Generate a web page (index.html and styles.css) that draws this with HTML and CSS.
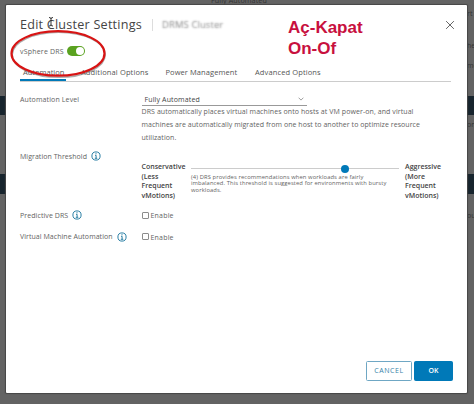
FILE: index.html
```
<!DOCTYPE html>
<html lang="en">
<head>
<meta charset="utf-8">
<title>Edit Cluster Settings</title>
<link rel="stylesheet" href="styles.css">
</head>
<body>
<div class="backdrop">
  <div class="back-title">Fully Automated</div>
  <div class="back-line l1">rt</div>
  <div class="back-line l2">he</div>
  <div class="back-line l3">me</div>
  <div class="band"></div>
  <div class="back-line l4">on</div>
  <div class="band second"></div>
  <div class="back-line l5">ou</div>
</div>
<main class="modal">
  <header class="head">
    <h1>Edit Cluster Settings</h1>
    <span class="divider"></span>
    <span class="cluster">DRMS Cluster</span>
    <svg class="close" viewBox="0 0 9 9"><path d="M1 1l7 7M8 1L1 8"/></svg>
  </header>
  <div class="switch-row"><span class="t-drs">vSphere DRS</span><span class="switch"></span></div>
  <nav class="tabs">
    <span class="tab active">Automation</span>
    <span class="tab t2">Additional Options</span>
    <span class="tab t3">Power Management</span>
    <span class="tab t4">Advanced Options</span>
  </nav>
  <section class="row level">
    <div class="label t-level">Automation Level</div>
    <div>
      <div class="select"><span>Fully Automated</span><svg viewBox="0 0 6 4"><path d="M.6.7L3 3.1 5.4.7"/></svg></div>
      <p class="help">DRS automatically places virtual machines onto hosts at VM power-on, and virtual<br><span class="tight">machines are automatically migrated from one host to another to optimize resource</span><br>utilization.</p>
    </div>
  </section>
  <section class="row threshold">
    <div class="label t-mig"><span class="tight">Migration Threshold</span><svg class="info" viewBox="0 0 10 10"><circle cx="5" cy="5" r="4.1"/><path d="M4 4.3h1.1v3M3.8 7.3h2.5M5 2.2v1.1"/></svg></div>
    <div class="scale">
      <div class="end">Conservative<br>(Less<br>Frequent<br>vMotions)</div>
      <div class="mid">
        <div class="track"><span class="knob"></span></div>
        <p class="note">(4) DRS provides recommendations when workloads are fairly<br>imbalanced. This threshold is suggested for environments with bursty<br>workloads.</p>
      </div>
      <div class="end">Aggressive<br>(More<br>Frequent<br>vMotions)</div>
    </div>
  </section>
  <section class="row option">
    <div class="label t-pred">Predictive DRS<svg class="info" viewBox="0 0 10 10"><circle cx="5" cy="5" r="4.1"/><path d="M4 4.3h1.1v3M3.8 7.3h2.5M5 2.2v1.1"/></svg></div>
    <div class="check"><span class="box"></span><span class="enable">Enable</span></div>
  </section>
  <section class="row option">
    <div class="label t-vm"><span class="tight">Virtual Machine Automation</span><svg class="info" viewBox="0 0 10 10"><circle cx="5" cy="5" r="4.1"/><path d="M4 4.3h1.1v3M3.8 7.3h2.5M5 2.2v1.1"/></svg></div>
    <div class="check"><span class="box"></span><span class="enable">Enable</span></div>
  </section>
  <footer class="foot"><span class="btn cancel">CANCEL</span><span class="btn ok">OK</span></footer>
</main>
<svg class="ring" viewBox="0 0 110 62"><ellipse class="shade" cx="53.7" cy="27.8" rx="46.5" ry="22.5"/><ellipse cx="53" cy="26.4" rx="46.5" ry="22.3"/></svg>
<svg class="cursor" viewBox="0 0 6 12"><path d="M1 1.5q2 0 2 1.2Q3 1.5 5 1.5M3 2v7.5M1 10q2 0 2-1.2Q3 10 5 10"/></svg>
<div class="annotation">Aç-Kapat<br>On-Of</div>
</body>
</html>
```
FILE: styles.css
```
* { box-sizing: border-box; }
body {
  margin: 0;
  width: 474px;
  height: 404px;
  overflow: hidden;
  position: relative;
  background: #636363;
  font-family: "Open Sans", "Noto Sans", sans-serif;
  font-size: 7px;
  letter-spacing: .08px;
  color: #636363;
}
p, h1 { margin: 0; }
svg { fill: none; flex: none; }
.tight { letter-spacing: .05px; }

.backdrop { height: 404px; overflow: hidden; color: #333; display: flow-root; }
.back-title { height: 8px; line-height: 8px; margin: -4px 0 0 211px; font-size: 7.2px; }
.back-line { margin-left: 467px; height: 8px; line-height: 8px; white-space: nowrap; }
.l1 { margin-top: 6px; }
.l2 { margin-top: 24px; }
.l3 { margin-top: 12px; }
.band { height: 19px; margin-top: 26px; background: #17242d; }
.l4 { margin-top: 6px; }
.band.second { margin-top: 45px; height: 20px; }
.l5 { margin-top: 18px; }

.modal {
  position: absolute;
  left: 6px;
  top: 5px;
  width: 461px;
  height: 388px;
  padding: 0 14px;
  background: #fff;
  box-shadow: 0 0 1px 1px #454545;
  border-radius: 1px;
  display: flex;
  flex-direction: column;
}
.head { display: flex; align-items: center; height: 38px; padding-top: 1px; white-space: nowrap; }
h1 { width: 132px; font-size: 12.6px; font-weight: 400; color: #444; line-height: 16px; letter-spacing: .23px; }
.divider { width: 1px; height: 12px; background: #ddd; }
.cluster { margin-left: 9px; font-size: 9.5px; color: transparent; text-shadow: 0 0 2px #888; }
.close { width: 10px; height: 10px; margin-left: auto; margin-right: -2px; stroke: #666; stroke-width: .9; }

.switch-row { display: flex; align-items: center; height: 16px; }
.t-drs { width: 47px; white-space: nowrap; letter-spacing: .2px; }
.switch { width: 18px; height: 10px; border-radius: 5px; background: #5aa220; display: flex; justify-content: flex-end; padding: 1px; }
.switch::after { content: ""; width: 8px; height: 8px; border-radius: 50%; background: #fff; }

.tabs { display: flex; height: 18px; margin-top: 5px; border-bottom: 1px solid #ccc; width: 431px; white-space: nowrap; color: #555; font-size: 7.5px; }
.tab { line-height: 16px; }
.active { width: 46px; height: 17px; padding-left: 3px; letter-spacing: 0; border-bottom: 2px solid #0079b8; }
.t2 { margin-left: 15px; width: 84.5px; letter-spacing: .13px; }
.t3 { width: 89.5px; }
.t4 { letter-spacing: .12px; }

.row { display: grid; grid-template-columns: 121.5px 1fr; white-space: nowrap; }
.label { display: flex; align-items: center; height: 12px; }
.t-level { letter-spacing: .13px; }
.info { width: 10px; height: 10px; margin-left: auto; stroke: #2179a0; stroke-width: .95; }
.level { margin-top: 11px; height: 57px; }
.select { width: 165px; height: 13px; border-bottom: 1px solid #999; padding: 0 3px; display: flex; align-items: center; justify-content: space-between; color: #444; letter-spacing: .14px; }
.select svg { width: 6px; height: 4px; stroke: #777; stroke-width: .7; }
.help { line-height: 12.8px; }
.threshold { height: 59px; }
.t-mig { width: 80.5px; }
.t-pred { width: 61.5px; }
.t-vm { width: 106.5px; }
.scale { display: flex; margin-top: 12px; height: 40px; }
.end { font-weight: 600; color: #444; line-height: 9.7px; width: 49.5px; letter-spacing: 0; }
.mid { width: 214px; padding-top: 6px; }
.track { height: 1px; width: 208px; background: #ccc; position: relative; }
.knob { position: absolute; left: 150px; top: -3.5px; width: 8px; height: 8px; border-radius: 50%; background: #0079b8; }
.note { margin-top: 5px; font-size: 5.8px; line-height: 6.4px; letter-spacing: .11px; }
.option { height: 21.5px; }
.check { display: flex; align-items: center; height: 12px; }
.box { width: 7px; height: 7px; border: 1px solid #8c8c8c; border-radius: 1px; margin-right: 2px; }
.enable { letter-spacing: .2px; padding-top: 1px; }

.foot { margin-top: auto; margin-bottom: 12px; display: flex; justify-content: flex-end; gap: 2px; }
.btn { height: 20px; border: 1px solid #6fa7c4; border-radius: 1.5px; line-height: 18px; text-align: center; font-size: 7px; }
.cancel { width: 46px; color: #3583a8; letter-spacing: .6px; }
.ok { width: 39px; background: #0079b8; border-color: #0079b8; color: #fff; font-weight: 600; }

.ring { position: absolute; left: 5px; top: 27px; width: 110px; height: 62px; stroke: #d81414; stroke-width: 2.2; }
.ring .shade { stroke: #777; stroke-width: 1.6; opacity: .6; }
.cursor { position: absolute; left: 48px; top: 16px; width: 6px; height: 12px; stroke: #222; stroke-width: .9; }
.annotation { position: absolute; left: 288px; top: 18px; font: bold 17px/20.5px "Liberation Sans", Arial, sans-serif; letter-spacing: 0; color: #c8103e; }
```
